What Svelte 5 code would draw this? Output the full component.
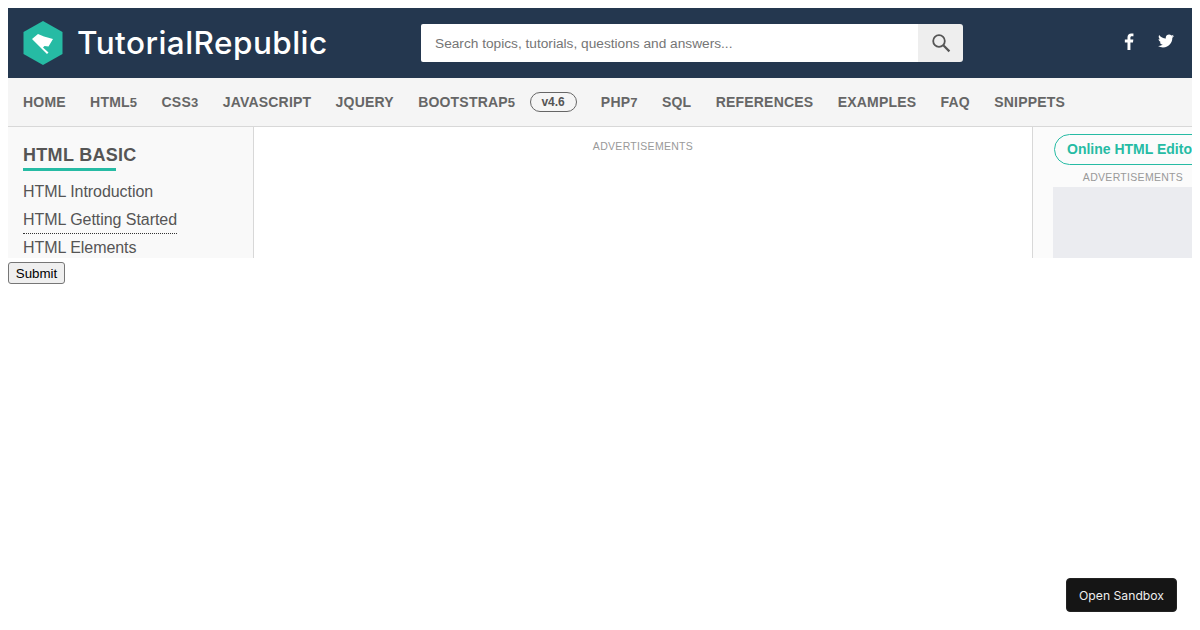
<script>
  const navItems = [
    { label: 'HOME' },
    { label: 'HTML', sub: '5' },
    { label: 'CSS', sub: '3' },
    { label: 'JAVASCRIPT' },
    { label: 'JQUERY' },
    { label: 'BOOTSTRAP', sub: '5', badge: 'v4.6' },
    { label: 'PHP', sub: '7' },
    { label: 'SQL' },
    { label: 'REFERENCES' },
    { label: 'EXAMPLES' },
    { label: 'FAQ' },
    { label: 'SNIPPETS' },
  ];
  const lessons = ['HTML Introduction', 'HTML Getting Started', 'HTML Elements'];
</script>

<div class="frame">
  <header class="topbar">
    <a class="logo" href="#top">
      <svg class="logo-mark" viewBox="0 0 40 44" width="40" height="44" aria-hidden="true">
        <path d="M20 0 L39.5 11 V33 L20 44 L0.5 33 V11 Z" fill="#26bba4" />
        <path d="M9 18 L15 13 L21 15.5 L30 18 L25.5 25.5 L21.5 25 L20 26.5 L25.5 31.5 L24 33 L9 18 Z" fill="#fff" />
      </svg>
      <span class="logo-text">TutorialRepublic</span>
    </a>
    <form class="search">
      <input type="text" placeholder="Search topics, tutorials, questions and answers..." />
      <span class="search-btn">
        <svg viewBox="0 0 20 20" width="20" height="20" aria-hidden="true">
          <circle cx="8" cy="8" r="5.8" fill="none" stroke="#555" stroke-width="1.8" />
          <path d="M12.3 12.3 L18.4 18.4" stroke="#555" stroke-width="2.2" />
        </svg>
      </span>
    </form>
    <div class="social">
      <svg viewBox="0 0 10 18" width="10" height="17" aria-hidden="true">
        <path d="M6.5 18 V10 H9.2 L9.6 7 H6.5 V5 C6.5 4 6.8 3.4 8.1 3.4 H9.7 V0.6 C9.4 0.6 8.5 0.5 7.4 0.5 C5 0.5 3.4 2 3.4 4.6 V7 H0.6 V10 H3.4 V18 Z" fill="#fff" />
      </svg>
      <svg viewBox="0 0 24 20" width="16" height="14" aria-hidden="true">
        <path d="M24 2.4 C23.1 2.8 22.2 3.1 21.2 3.2 C22.2 2.6 23 1.6 23.4 0.5 C22.4 1.1 21.3 1.5 20.2 1.7 C18.3 -0.3 15.2 -0.4 13.2 1.5 C11.9 2.7 11.4 4.5 11.8 6.2 C7.8 6 4.1 4.1 1.7 1 C0.4 3.2 1 6.1 3.2 7.5 C2.4 7.5 1.6 7.3 0.9 6.9 C0.9 9.3 2.6 11.3 4.9 11.8 C4.2 12 3.4 12 2.7 11.9 C3.3 13.9 5.2 15.3 7.3 15.4 C5.3 17 2.6 17.7 0 17.4 C2.2 18.8 4.8 19.6 7.5 19.6 C16.6 19.6 21.7 11.9 21.5 5 C22.5 4.3 23.3 3.4 24 2.4 Z" fill="#fff" />
      </svg>
    </div>
  </header>

  <nav class="menu">
    {#each navItems as item (item.label)}
      <a href="#top">{item.label}{#if item.sub}<span class="ver">{item.sub}</span>{/if}</a>
      {#if item.badge}<span class="badge">{item.badge}</span>{/if}
    {/each}
  </nav>

  <div class="columns">
    <aside class="sidebar">
      <h3>HTML BASIC</h3>
      <ul>
        {#each lessons as lesson, i (lesson)}
          <li><a href="#top" class:dotted={i === 1}>{lesson}</a></li>
        {/each}
      </ul>
    </aside>
    <main class="content">
      <div class="ad-label">ADVERTISEMENTS</div>
    </main>
    <aside class="rail">
      <a class="editor-btn" href="#top">Online HTML Editor</a>
      <div class="ad-label rail-label">ADVERTISEMENTS</div>
      <div class="ad-box"></div>
    </aside>
  </div>
</div>

<button class="submit" type="button">Submit</button>
<button class="sandbox" type="button">Open Sandbox</button>

<style>
  :global(body) {
    background: #fff;
    font-family: "Liberation Sans", Arial, sans-serif;
  }
  .frame {
    margin: 8px 8px 0;
    height: 250px;
    overflow: hidden;
    display: flex;
    flex-direction: column;
  }
  .topbar {
    flex: none;
    height: 70px;
    background: #24374f;
    display: flex;
    align-items: center;
    padding-left: 15px;
    box-sizing: border-box;
  }
  .logo {
    display: flex;
    align-items: center;
    gap: 14px;
    text-decoration: none;
    width: 398px;
    flex: none;
  }
  .logo-mark {
    flex: none;
  }
  .logo-text {
    color: #fff;
    font-family: Inter, sans-serif;
    font-weight: 500;
    font-size: 31.5px;
    letter-spacing: 0.45px;
    line-height: 1;
  }
  .search {
    display: flex;
    width: 542px;
    height: 38px;
    margin: 0;
    flex: none;
  }
  .search input {
    flex: 1;
    min-width: 0;
    border: 0;
    outline: none;
    background: #fff;
    border-radius: 2px 0 0 2px;
    padding: 0 14px;
    font: 13.7px "Liberation Sans", Arial, sans-serif;
  }
  .search input::placeholder {
    color: #757575;
    opacity: 1;
  }
  .search-btn {
    width: 45px;
    background: #eee;
    border-radius: 0 3px 3px 0;
    display: flex;
    align-items: center;
    justify-content: center;
  }
  .social {
    margin-left: auto;
    display: flex;
    align-items: center;
    gap: 24px;
    padding-right: 18px;
    margin-top: -4px;
  }
  .menu {
    flex: none;
    height: 49px;
    box-sizing: border-box;
    background: #f5f5f5;
    border-bottom: 1px solid #d8d8d8;
    display: flex;
    align-items: center;
    padding: 0 15px 1px;
    gap: 24.3px;
    white-space: nowrap;
  }
  .menu a {
    color: #666;
    font-size: 14px;
    font-weight: bold;
    letter-spacing: 0.2px;
    text-decoration: none;
  }
  .ver {
    font-size: 13px;
  }
  .badge {
    margin-left: -10px;
    width: 47px;
    height: 20px;
    box-sizing: border-box;
    border: 1px solid #666;
    border-radius: 10px;
    color: #555;
    font-size: 12px;
    font-weight: bold;
    display: flex;
    align-items: center;
    justify-content: center;
  }
  .columns {
    flex: 1;
    min-height: 0;
    display: flex;
  }
  .sidebar {
    flex: none;
    width: 246px;
    box-sizing: border-box;
    background: #f9f9f9;
    border-right: 1px solid #d8d8d8;
    padding: 18px 15px 0;
  }
  .sidebar h3 {
    margin: 0;
    width: 93px;
    padding-bottom: 2px;
    border-bottom: 3px solid #26bba4;
    color: #555;
    font-size: 18px;
    line-height: 21px;
    font-weight: bold;
    letter-spacing: 0.3px;
    white-space: nowrap;
  }
  .sidebar ul {
    list-style: none;
    margin: 7px 0 0;
    padding: 0;
  }
  .sidebar li {
    height: 28px;
  }
  .sidebar a {
    display: inline-block;
    color: #555;
    font-size: 16px;
    letter-spacing: -0.05px;
    line-height: 28px;
    height: 28px;
    box-sizing: border-box;
    text-decoration: none;
  }
  .sidebar a.dotted {
    border-bottom: 1px dotted #333;
  }
  .content {
    flex: none;
    width: 778px;
    text-align: center;
    padding-top: 13px;
    box-sizing: border-box;
  }
  .ad-label {
    color: #999;
    font-size: 10.5px;
    line-height: 12px;
    letter-spacing: 0.3px;
  }
  .rail {
    flex: 1;
    min-width: 0;
    box-sizing: border-box;
    background: #fbfbfb;
    border-left: 1px solid #d8d8d8;
    padding: 7px 0 0 21px;
    overflow: hidden;
  }
  .editor-btn {
    display: block;
    width: 190px;
    height: 31px;
    box-sizing: border-box;
    border: 1px solid #26bba4;
    border-radius: 16px;
    color: #26bba4;
    font-size: 14px;
    font-weight: bold;
    line-height: 29px;
    padding-left: 12px;
    text-decoration: none;
    white-space: nowrap;
  }
  .rail-label {
    margin: 6px 0 4px;
    width: 158px;
    text-align: center;
  }
  .ad-box {
    margin-left: -1px;
    height: 80px;
    width: 200px;
    background: #ebecf0;
  }
  .submit {
    display: block;
    margin: 4px 0 0 8px;
    width: 57px;
    height: 22px;
    padding: 0;
    font: 13.33px "Liberation Sans", Arial, sans-serif;
    color: #000;
    background: #efefef;
    border: 1px solid #767676;
    border-radius: 3px;
  }
  .sandbox {
    position: fixed;
    right: 23px;
    bottom: 18px;
    width: 111px;
    height: 34px;
    padding: 0;
    background: #151515;
    color: #eee;
    border: 1px solid #222;
    border-radius: 4px;
    font: 12.2px Inter, sans-serif;
  }
</style>
